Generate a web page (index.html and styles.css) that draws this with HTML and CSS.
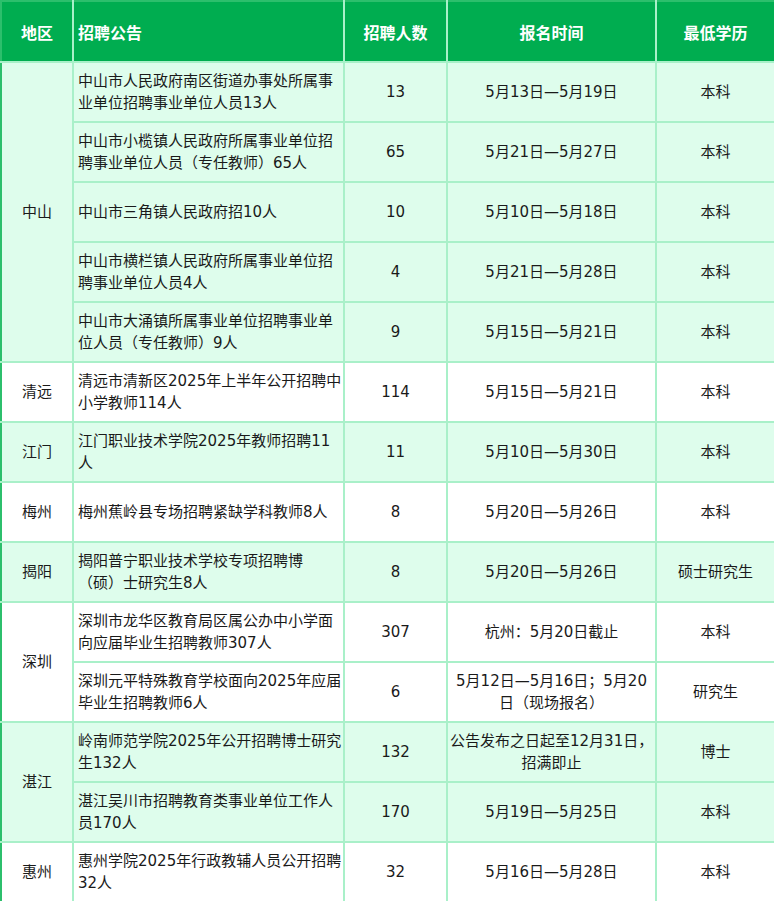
FILE: index.html
```html
<!DOCTYPE html>
<html lang="zh-CN">
<head>
<meta charset="utf-8">
<title>招聘公告</title>
<link rel="stylesheet" href="styles.css">
</head>
<body>
<table class="jobs">
  <colgroup>
    <col class="c-area"><col class="c-title"><col class="c-num"><col class="c-time"><col class="c-edu">
  </colgroup>
  <thead>
    <tr><th class="center">地区</th><th class="left">招聘公告</th><th class="center">招聘人数</th><th class="center">报名时间</th><th class="center">最低学历</th></tr>
  </thead>
  <tbody>
    <tr class="g"><td rowspan="5" class="center area">中山</td><td class="left">中山市人民政府南区街道办事处所属事业单位招聘事业单位人员13人</td><td class="center">13</td><td class="center time">5月13日—5月19日</td><td class="center">本科</td></tr>
    <tr class="g"><td class="left">中山市小榄镇人民政府所属事业单位招聘事业单位人员（专任教师）65人</td><td class="center">65</td><td class="center time">5月21日—5月27日</td><td class="center">本科</td></tr>
    <tr class="g"><td class="left">中山市三角镇人民政府招10人</td><td class="center">10</td><td class="center time">5月10日—5月18日</td><td class="center">本科</td></tr>
    <tr class="g"><td class="left">中山市横栏镇人民政府所属事业单位招聘事业单位人员4人</td><td class="center">4</td><td class="center time">5月21日—5月28日</td><td class="center">本科</td></tr>
    <tr class="g"><td class="left">中山市大涌镇所属事业单位招聘事业单位人员（专任教师）9人</td><td class="center">9</td><td class="center time">5月15日—5月21日</td><td class="center">本科</td></tr>
    <tr class="w"><td class="center area">清远</td><td class="left">清远市清新区2025年上半年公开招聘中小学教师114人</td><td class="center">114</td><td class="center time">5月15日—5月21日</td><td class="center">本科</td></tr>
    <tr class="g"><td class="center area">江门</td><td class="left">江门职业技术学院2025年教师招聘11人</td><td class="center">11</td><td class="center time">5月10日—5月30日</td><td class="center">本科</td></tr>
    <tr class="w"><td class="center area">梅州</td><td class="left">梅州蕉岭县专场招聘紧缺学科教师8人</td><td class="center">8</td><td class="center time">5月20日—5月26日</td><td class="center">本科</td></tr>
    <tr class="g"><td class="center area">揭阳</td><td class="left">揭阳普宁职业技术学校专项招聘博<br>（硕）士研究生8人</td><td class="center">8</td><td class="center time">5月20日—5月26日</td><td class="center">硕士研究生</td></tr>
    <tr class="w"><td rowspan="2" class="center area">深圳</td><td class="left">深圳市龙华区教育局区属公办中小学面向应届毕业生招聘教师307人</td><td class="center">307</td><td class="center time">杭州：5月20日截止</td><td class="center">本科</td></tr>
    <tr class="w"><td class="left">深圳元平特殊教育学校面向2025年应届毕业生招聘教师6人</td><td class="center">6</td><td class="center time">5月12日—5月16日；5月20<br>日（现场报名）</td><td class="center">研究生</td></tr>
    <tr class="g"><td rowspan="2" class="center area">湛江</td><td class="left">岭南师范学院2025年公开招聘博士研究生132人</td><td class="center">132</td><td class="center time">公告发布之日起至12月31日，<br>招满即止</td><td class="center">博士</td></tr>
    <tr class="g"><td class="left">湛江吴川市招聘教育类事业单位工作人员170人</td><td class="center">170</td><td class="center time">5月19日—5月25日</td><td class="center">本科</td></tr>
    <tr class="w"><td class="center area">惠州</td><td class="left">惠州学院2025年行政教辅人员公开招聘32人</td><td class="center">32</td><td class="center time">5月16日—5月28日</td><td class="center">本科</td></tr>
  </tbody>
</table>
</body>
</html>
```

FILE: styles.css
```css
html, body {
  margin: 0;
  padding: 0;
  background: #ffffff;
}
body {
  font-family: "DejaVu Sans", "Noto Sans CJK SC", sans-serif;
  font-size: 15px;
  color: #1a1a1a;
  text-spacing-trim: space-all;
}
.jobs {
  width: 774px;
  table-layout: fixed;
  border-collapse: collapse;
  border: 2px solid #2cbf6c;
}
.c-area { width: 72px; }
.c-title { width: 271px; }
.c-num { width: 103px; }
.c-time { width: 209px; }
.c-edu { width: 119px; }
.jobs th, .jobs td {
  border: 2px solid #a9f0c9;
  padding: 0 4px;
  line-height: 22px;
  vertical-align: middle;
  word-break: break-all;
}
.jobs th {
  background: #00ad50;
  color: #ffffff;
  font-family: "Noto Sans CJK SC", sans-serif;
  font-size: 16px;
  font-weight: bold;
  height: 59px;
  border-top: none;
}
.jobs td {
  height: 58px;
}
.jobs td.left {
  padding: 0 0 0 4px;
}
.jobs td.time {
  padding: 0 2px;
  white-space: nowrap;
}
.jobs tr.g td { background: #defdec; }
.jobs tr.w td { background: #ffffff; }
.jobs thead th:first-child, .jobs td.area { border-left: 2px solid #2cbf6c; }
.jobs th:last-child, .jobs td:last-child { border-right: 2px solid #2cbf6c; }
.jobs tbody tr:last-child td { border-bottom: 2px solid #2cbf6c; }
.center { text-align: center; }
.left { text-align: left; }
```
